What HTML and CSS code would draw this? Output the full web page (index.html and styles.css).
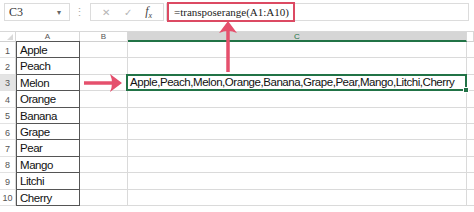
FILE: index.html
```html
<!DOCTYPE html>
<html lang="en">
<head>
  <meta charset="UTF-8">
  <title>transposerange</title>
  <link rel="stylesheet" href="styles.css">
</head>
<body>

  <div class="formula-bar">
    <div class="name-box">C3 <span class="caret">&#9662;</span></div>
    <div class="dots">&#8942;</div>
    <div class="fx-box">
      <span class="fx-icon">&#10005;</span>
      <span class="fx-icon">&#10003;</span>
      <span class="fx-label"><i>f</i><sub>x</sub></span>
    </div>
    <div class="input">
      <span class="formula">=transposerange(A1:A10)</span>
    </div>
  </div>

  <div class="sheet" id="sheet">
    <div class="corner"><span class="corner-tri"></span></div>
    <div class="col-head">A</div>
    <div class="col-head">B</div>
    <div class="col-head active">C</div>
    <div class="col-head edge"></div>
  </div>

  <!-- pink callout arrows drawn over the sheet -->
  <svg class="arrow arrow-up" width="20" height="54" viewBox="0 0 20 54">
    <path d="M10 6 V52" stroke="#e5506d" stroke-width="3.5" />
    <path d="M1 13 L10 1 L19 13 Q10 9 1 13 Z" fill="#e5506d" />
  </svg>
  <svg class="arrow arrow-right" width="40" height="20" viewBox="0 0 40 20">
    <path d="M0 10 H32" stroke="#e5506d" stroke-width="3.5" />
    <path d="M26 1 L38 10 L26 19 Q30 10 26 1 Z" fill="#e5506d" />
  </svg>

  <script>
    const fruits = ["Apple", "Peach", "Melon", "Orange", "Banana", "Grape", "Pear", "Mango", "Litchi", "Cherry"];
    const sheet = document.getElementById("sheet");

    fruits.forEach((name, i) => {
      const row = i + 1;
      const cells = [
        ["row-head" + (row === 3 ? " active" : ""), row],
        ["cell boxed", name],
        ["cell", ""],
        ["cell" + (row === 3 ? " selected" : ""), row === 3 ? fruits.join(",") : ""],
        ["cell edge", ""]
      ];
      cells.forEach(([cls, text]) => {
        const div = document.createElement("div");
        div.className = cls;
        div.textContent = text;
        sheet.appendChild(div);
      });
    });
  </script>
</body>
</html>
```

FILE: styles.css
```css
body {
  margin: 0;
  background: #fff;
  font-family: "Liberation Sans", Arial, sans-serif;
  width: 474px;
  height: 212px;
  overflow: hidden;
  position: relative;
}

.formula-bar {
  display: flex;
  align-items: center;
  height: 20px;
  padding: 2px 0 0 4px;
  font-family: "Liberation Serif", "Times New Roman", serif;
}

.name-box {
  width: 66px;
  height: 18px;
  border: 1px solid #dcdcdc;
  display: flex;
  align-items: center;
  justify-content: space-between;
  padding: 0 4px;
  box-sizing: border-box;
  font-size: 12px;
  color: #333;
}

.caret {
  font-size: 8px;
  color: #666;
  margin-right: 4px;
}

.dots {
  width: 18px;
  text-align: center;
  color: #aaa;
  font-size: 11px;
}

.fx-box {
  width: 74px;
  height: 18px;
  border: 1px solid #dcdcdc;
  box-sizing: border-box;
  display: flex;
  align-items: center;
  justify-content: space-around;
  padding: 0 4px;
  margin-left: 2px;
  color: #b5b5b5;
  font-size: 10px;
}

.fx-label {
  color: #444;
  font-size: 12px;
}

.fx-label sub {
  font-size: 8px;
  font-style: italic;
}

.input {
  flex: 1;
  height: 18px;
  margin-left: 2px;
  margin-right: 5px;
  border: 1px solid #dcdcdc;
  box-sizing: border-box;
  position: relative;
}

.formula {
  position: absolute;
  left: 0;
  top: -2px;
  width: 128px;
  height: 20px;
  border: 2px solid #dc4a63;
  box-sizing: border-box;
  font-size: 11px;
  line-height: 16px;
  padding-left: 5px;
  color: #222;
  white-space: nowrap;
}

.sheet {
  display: grid;
  grid-template-columns: 16px 64px 48px 339px 7px;
  grid-template-rows: 11px repeat(10, 16.4px);
  margin-top: 9px;
}

.corner,
.col-head {
  border-top: 1px solid #d8d8d8;
  border-right: 1px solid #d8d8d8;
  border-bottom: 1px solid #d0d0d0;
  box-sizing: border-box;
  font-size: 8px;
  line-height: 10px;
  text-align: center;
  color: #555;
}

.corner {
  position: relative;
}

.corner-tri {
  position: absolute;
  right: 2px;
  bottom: 1px;
  width: 0;
  height: 0;
  border-left: 6px solid transparent;
  border-bottom: 6px solid #d9d9d9;
}

.col-head.active {
  background: #d6d6d6;
  border-bottom: 2px solid #217346;
  color: #217346;
}

.row-head {
  border-right: 1px solid #d8d8d8;
  border-bottom: 1px solid #e2e2e2;
  box-sizing: border-box;
  font-size: 9px;
  color: #555;
  display: flex;
  align-items: center;
  justify-content: center;
  padding-top: 2px;
}

.row-head.active {
  background: #e4e4e4;
}

.cell {
  border-right: 1px solid #dadada;
  border-bottom: 1px solid #dadada;
  box-sizing: border-box;
  font-size: 11.5px;
  letter-spacing: -0.45px;
  line-height: 16px;
  padding-left: 3px;
  color: #111;
  white-space: nowrap;
}

.cell.boxed {
  border: 1px solid #555;
  border-top: none;
  border-left: 1px solid #555;
  box-shadow: 0 -1px 0 #555;
}

.cell.edge {
  border-right: none;
}

.cell.selected {
  border: 2px solid #217346;
  line-height: 13px;
  padding-left: 2px;
  position: relative;
  margin-left: -2px;
  margin-top: -1px;
}

.cell.selected::after {
  content: "";
  position: absolute;
  right: -4px;
  bottom: -4px;
  width: 4px;
  height: 4px;
  background: #217346;
  border: 1px solid #fff;
}

.arrow {
  position: absolute;
}

.arrow-up {
  left: 218px;
  top: 20px;
}

.arrow-right {
  left: 84px;
  top: 73px;
}
```
